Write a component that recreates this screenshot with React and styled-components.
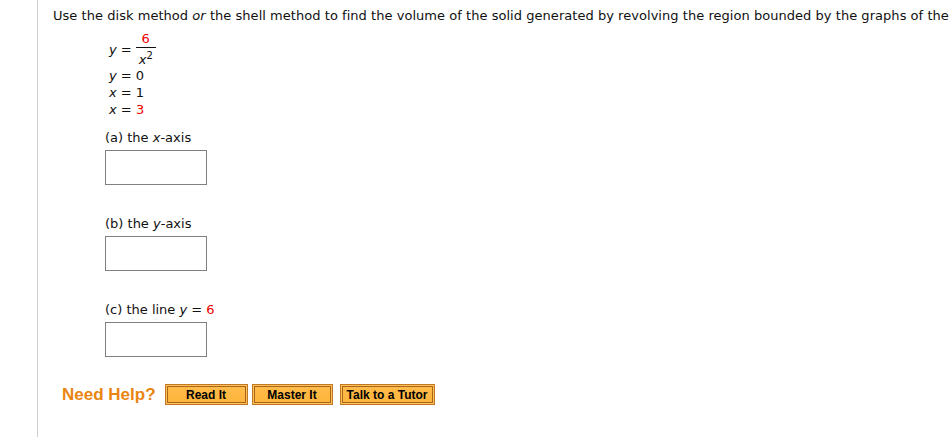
import React from "react";
import styled, { createGlobalStyle } from "styled-components";

const Global = createGlobalStyle`
  html, body { margin: 0; padding: 0; background: #fff; overflow: hidden; }
  body { font-family: "DejaVu Sans", Verdana, sans-serif; }
`;

const Page = styled.div`
  display: flex;
  height: 437px;
  width: 950px;
  overflow: hidden;
`;

const Gutter = styled.div`
  width: 37px;
  flex: none;
  border-right: 1px solid #cfcfcf;
`;

const Content = styled.div`
  padding: 8px 0 0 15px;
  font-size: 13px;
  color: #111;
  line-height: 16px;
  min-width: 0;
`;

const Prompt = styled.div`
  white-space: nowrap;
  letter-spacing: 0.04px;
`;

const Red = styled.span`
  color: #ee0000;
`;

const Eqs = styled.div`
  margin: 8px 0 0 56px;
  display: flex;
  flex-direction: column;
`;

const EqLine = styled.div`
  display: flex;
  align-items: center;
  height: 17px;
  white-space: pre;
`;

const FracLine = styled(EqLine)`
  height: 35px;
`;

const Frac = styled.span`
  display: inline-flex;
  flex-direction: column;
  align-items: center;
  margin-left: 4px;
`;

const Num = styled.span`
  color: #ee0000;
  line-height: 13px;
  padding: 0 3px 2px;
  border-bottom: 1px solid #111;
  width: 14px;
  text-align: center;
`;

const Den = styled.span`
  line-height: 14px;
  padding-top: 5px;
`;

const Sup = styled.sup`
  font-size: 10px;
  line-height: 0;
  vertical-align: 5px;
`;

const Parts = styled.div`
  margin: 12px 0 0 52px;
  display: flex;
  flex-direction: column;
  gap: 31px;
`;

const Part = styled.div`
  display: flex;
  flex-direction: column;
  gap: 4px;
`;

const AnswerBox = styled.div`
  width: 100px;
  height: 33px;
  border: 1px solid #808080;
`;

const Help = styled.div`
  display: flex;
  align-items: center;
  margin: 27px 0 0 9px;
`;

const HelpLabel = styled.span`
  font-family: "Liberation Sans", Arial, sans-serif;
  font-weight: bold;
  font-size: 17px;
  color: #ea8511;
  margin-right: 9px;
`;

const Btn = styled.button`
  width: ${(p) => p.w}px;
  height: 21px;
  padding: 1px;
  border: 1px solid #c27720;
  background: #ffc15a;
  display: flex;
  cursor: pointer;
  margin-right: ${(p) => p.mr || 0}px;
`;

const BtnInner = styled.span`
  flex: 1;
  border: 1px solid #a9661a;
  background: linear-gradient(#ffbb4a, #ffb53d);
  font-family: "Liberation Sans", Arial, sans-serif;
  font-weight: bold;
  font-size: 12px;
  color: #000;
  display: flex;
  align-items: center;
  justify-content: center;
`;

export default function App() {
  return (
    <>
      <Global />
      <Page>
        <Gutter />
        <Content>
          <Prompt>
            Use the disk method <i>or</i> the shell method to find the volume of the solid generated by revolving the region bounded by the graphs of the
          </Prompt>
          <Eqs>
            <FracLine>
              <i>y</i> =
              <Frac>
                <Num>6</Num>
                <Den>
                  <i>x</i>
                  <Sup>2</Sup>
                </Den>
              </Frac>
            </FracLine>
            <EqLine>
              <i>y</i> = 0
            </EqLine>
            <EqLine>
              <i>x</i> = 1
            </EqLine>
            <EqLine>
              <i>x</i> = <Red>3</Red>
            </EqLine>
          </Eqs>
          <Parts>
            <Part>
              <span>
                (a) the <i>x</i>-axis
              </span>
              <AnswerBox />
            </Part>
            <Part>
              <span>
                (b) the <i>y</i>-axis
              </span>
              <AnswerBox />
            </Part>
            <Part>
              <span>
                (c) the line <i>y</i> = <Red>6</Red>
              </span>
              <AnswerBox />
            </Part>
          </Parts>
          <Help>
            <HelpLabel>Need Help?</HelpLabel>
            <Btn w={83} mr={4}>
              <BtnInner>Read It</BtnInner>
            </Btn>
            <Btn w={81} mr={7}>
              <BtnInner>Master It</BtnInner>
            </Btn>
            <Btn w={95}>
              <BtnInner>Talk to a Tutor</BtnInner>
            </Btn>
          </Help>
        </Content>
      </Page>
    </>
  );
}
